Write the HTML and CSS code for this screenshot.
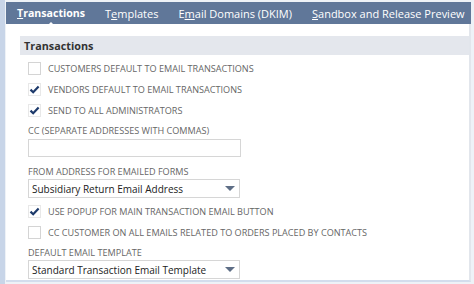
FILE: index.html
```html
<!DOCTYPE html>
<html lang="en">
<head>
    <meta charset="UTF-8">
    <title>Email Preferences</title>
    <link rel="stylesheet" href="styles.css">
</head>
<body>
    <div class="frame">
        <!-- tabs -->
        <div class="tab-bar">
            <span class="tab active"><u>T</u>ransactions</span>
            <span class="tab">T<u>e</u>mplates</span>
            <span class="tab">E<u>m</u>ail Domains (DKIM)</span>
            <span class="tab"><u>S</u>andbox and Release Preview</span>
        </div>

        <div class="panel">
            <div class="section-title">Transactions</div>

            <div class="fields">
                <label class="check-row">
                    <span class="checkbox"></span>
                    <span>CUSTOMERS DEFAULT TO EMAIL TRANSACTIONS</span>
                </label>
                <label class="check-row">
                    <span class="checkbox checked"><svg viewBox="0 0 11 11"><path d="M1.5 5.6 L4.2 8.2 L9.6 2.6"/></svg></span>
                    <span>VENDORS DEFAULT TO EMAIL TRANSACTIONS</span>
                </label>
                <label class="check-row">
                    <span class="checkbox checked"><svg viewBox="0 0 11 11"><path d="M1.5 5.6 L4.2 8.2 L9.6 2.6"/></svg></span>
                    <span>SEND TO ALL ADMINISTRATORS</span>
                </label>

                <div class="field cc-field">
                    <div class="field-label">CC (SEPARATE ADDRESSES WITH COMMAS)</div>
                    <div class="text-input"></div>
                </div>

                <div class="field from-field">
                    <div class="field-label">FROM ADDRESS FOR EMAILED FORMS</div>
                    <div class="select">
                        <span>Subsidiary Return Email Address</span>
                        <span class="arrow"></span>
                    </div>
                </div>

                <label class="check-row popup-row">
                    <span class="checkbox checked"><svg viewBox="0 0 11 11"><path d="M1.5 5.6 L4.2 8.2 L9.6 2.6"/></svg></span>
                    <span>USE POPUP FOR MAIN TRANSACTION EMAIL BUTTON</span>
                </label>
                <label class="check-row">
                    <span class="checkbox"></span>
                    <span>CC CUSTOMER ON ALL EMAILS RELATED TO ORDERS PLACED BY CONTACTS</span>
                </label>

                <div class="field template-field">
                    <div class="field-label">DEFAULT EMAIL TEMPLATE</div>
                    <div class="select">
                        <span>Standard Transaction Email Template</span>
                        <span class="arrow"></span>
                    </div>
                </div>
            </div>
        </div>
    </div>
</body>
</html>
```

FILE: styles.css
```css
body {
    margin: 0;
    font-family: "Open Sans", Arial, sans-serif;
    background-color: #ffffff;
}

.frame {
    width: 474px;
    height: 284px;
    box-sizing: border-box;
    padding: 2px 3px 0 1px;
    background-color: #eef2f7;
    border-left: 5px solid #c8d5e8;
    overflow: hidden;
}

/* tabs */
.tab-bar {
    height: 22px;
    background-color: #607799;
    display: flex;
    align-items: center;
    padding-left: 11px;
    gap: 20px;
}

.tab {
    color: #ffffff;
    font-size: 11px;
    position: relative;
    white-space: nowrap;
}

.tab.active {
    font-weight: bold;
    font-size: 10.6px;
}

.tab.active::after {
    content: "";
    position: absolute;
    left: 50%;
    bottom: -6px;
    margin-left: -4px;
    border-left: 4px solid transparent;
    border-right: 4px solid transparent;
    border-bottom: 4px solid #ffffff;
}

.tab u {
    text-decoration: underline;
    text-underline-offset: 1px;
}

.panel {
    background-color: #ffffff;
    height: 258px;
    padding: 12px 0 0 14px;
    box-sizing: border-box;
    border-right: 2px solid #e2e6ec;
    border-bottom: 2px solid #d3dded;
}

.section-title {
    background-color: #e4e7ed;
    color: #333333;
    font-size: 10.8px;
    font-weight: bold;
    height: 19px;
    line-height: 19px;
    padding-left: 4px;
}

.fields {
    padding: 3px 0 0 8px;
}

.check-row {
    display: flex;
    align-items: center;
    height: 21px;
    gap: 7px;
    font-size: 9.1px;
    color: #666666;
    white-space: nowrap;
}

.checkbox {
    width: 11px;
    height: 11px;
    border: 1px solid #d4d4d4;
    background-color: #ffffff;
    flex-shrink: 0;
}

.checkbox.checked {
    border-color: #e8e8e8;
}

.checkbox svg {
    display: block;
    width: 11px;
    height: 11px;
}

.checkbox svg path {
    fill: none;
    stroke: #1d3a6b;
    stroke-width: 2.2;
}

.cc-field {
    margin-top: 3px;
}

.from-field {
    margin-top: 8px;
}

.template-field {
    margin-top: 3px;
}

.field-label {
    font-size: 9.1px;
    color: #666666;
    height: 14px;
    line-height: 14px;
    white-space: nowrap;
}

.text-input {
    width: 211px;
    height: 16px;
    border: 1px solid #d6d6d6;
    margin-top: 1px;
}

.select {
    width: 207px;
    height: 17px;
    border: 1px solid #d6d6d6;
    padding: 0 0 0 3px;
    display: flex;
    align-items: center;
    justify-content: space-between;
    font-size: 10px;
    color: #222222;
    white-space: nowrap;
}

.arrow {
    width: 0;
    height: 0;
    border-left: 5px solid transparent;
    border-right: 5px solid transparent;
    border-top: 5px solid #5e6e86;
    margin-right: 4px;
}

.popup-row {
    margin-top: 3px;
}
```
